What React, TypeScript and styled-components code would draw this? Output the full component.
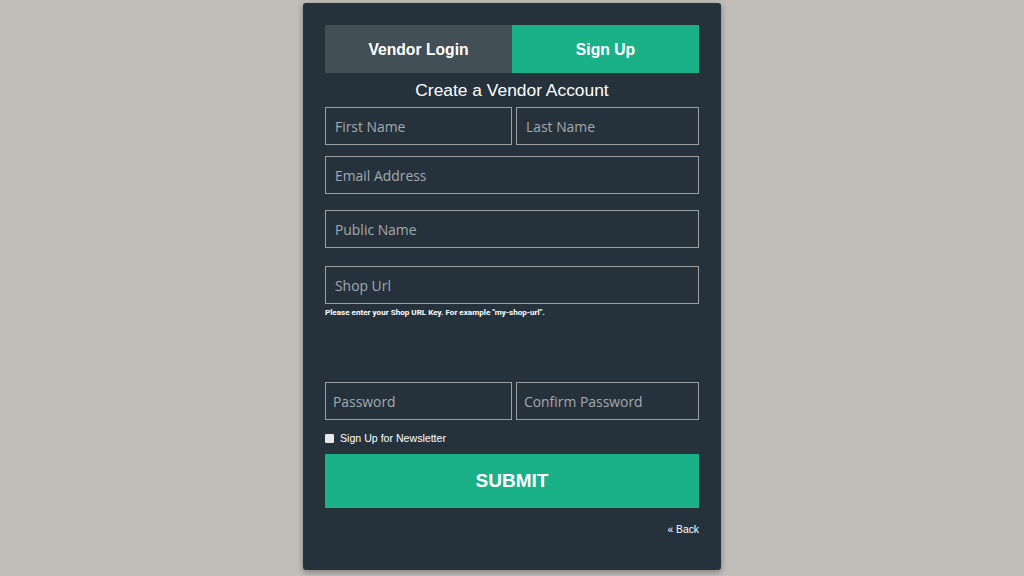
import styled, { createGlobalStyle } from "styled-components";

const GlobalStyle = createGlobalStyle`
  html, body {
    margin: 0;
    padding: 0;
    background: #c1bdb9;
    font-family: "Liberation Sans", Arial, sans-serif;
  }
  * { box-sizing: border-box; }
`;

const Page = styled.div`
  display: flex;
  justify-content: center;
  padding-top: 3px;
  min-height: 576px;
`;

const Card = styled.div`
  width: 418px;
  height: 567px;
  background: #25323c;
  border-radius: 3px;
  box-shadow: 0 2px 6px rgba(0, 0, 0, 0.35);
  padding: 22px 22px 0 22px;
  display: flex;
  flex-direction: column;
`;

const Tabs = styled.div`
  display: flex;
  height: 48px;
`;

const Tab = styled.div<{ $active?: boolean }>`
  flex: 1;
  display: flex;
  align-items: center;
  justify-content: center;
  background: ${(p) => (p.$active ? "#1ab188" : "#434f57")};
  color: #ffffff;
  font-weight: bold;
  font-size: 15.7px;
  padding-top: 2px;
`;

const Title = styled.h1`
  margin: 0;
  height: 34px;
  display: flex;
  align-items: center;
  justify-content: center;
  color: #ffffff;
  font-weight: normal;
  font-size: 17.4px;
`;

const Row = styled.div<{ $mt?: number }>`
  display: flex;
  gap: 4px;
  margin-top: ${(p) => p.$mt ?? 0}px;
`;

const Input = styled.input<{ $half?: boolean; $pad?: number }>`
  flex: ${(p) => (p.$half ? "0 0 50%" : "1")};
  min-width: 0;
  height: 38px;
  background: transparent;
  border: 1px solid #9aa0a4;
  border-radius: 0;
  padding: 0 ${(p) => p.$pad ?? 9}px;
  color: #ffffff;
  font-family: "Open Sans", sans-serif;
  font-size: 13.9px;
  outline: none;
  &::placeholder {
    color: #a4a9ad;
  }
`;

const Help = styled.div`
  margin-top: 3px;
  color: #ffffff;
  font-family: Roboto, sans-serif;
  font-weight: bold;
  font-size: 8.1px;
  height: 75px;
`;

const CheckRow = styled.label`
  display: flex;
  align-items: center;
  gap: 6px;
  margin-top: 12px;
  color: #ffffff;
  font-size: 10.6px;
  height: 12px;
`;

const Box = styled.span`
  width: 9px;
  height: 9px;
  background: #e8e8e8;
  border-radius: 1px;
`;

const Submit = styled.button`
  margin-top: 10px;
  height: 54px;
  border: none;
  background: #1ab188;
  color: #ffffff;
  font-family: "Liberation Sans", Arial, sans-serif;
  font-weight: bold;
  font-size: 19px;
  cursor: pointer;
`;

const Back = styled.a`
  align-self: flex-end;
  margin-top: 16px;
  color: #ffffff;
  font-size: 10.3px;
  text-decoration: none;
`;

export default function App() {
  return (
    <>
      <GlobalStyle />
      <Page>
        <Card>
          <Tabs>
            <Tab>Vendor Login</Tab>
            <Tab $active>Sign Up</Tab>
          </Tabs>
          <Title>Create a Vendor Account</Title>
          <Row>
            <Input $half placeholder="First Name" />
            <Input placeholder="Last Name" />
          </Row>
          <Row $mt={11}>
            <Input placeholder="Email Address" />
          </Row>
          <Row $mt={16}>
            <Input placeholder="Public Name" />
          </Row>
          <Row $mt={18}>
            <Input placeholder="Shop Url" />
          </Row>
          <Help>Please enter your Shop URL Key. For example "my-shop-url".</Help>
          <Row>
            <Input $half $pad={7} placeholder="Password" />
            <Input $pad={7} placeholder="Confirm Password" />
          </Row>
          <CheckRow>
            <Box />
            Sign Up for Newsletter
          </CheckRow>
          <Submit>SUBMIT</Submit>
          <Back href="#">« Back</Back>
        </Card>
      </Page>
    </>
  );
}
